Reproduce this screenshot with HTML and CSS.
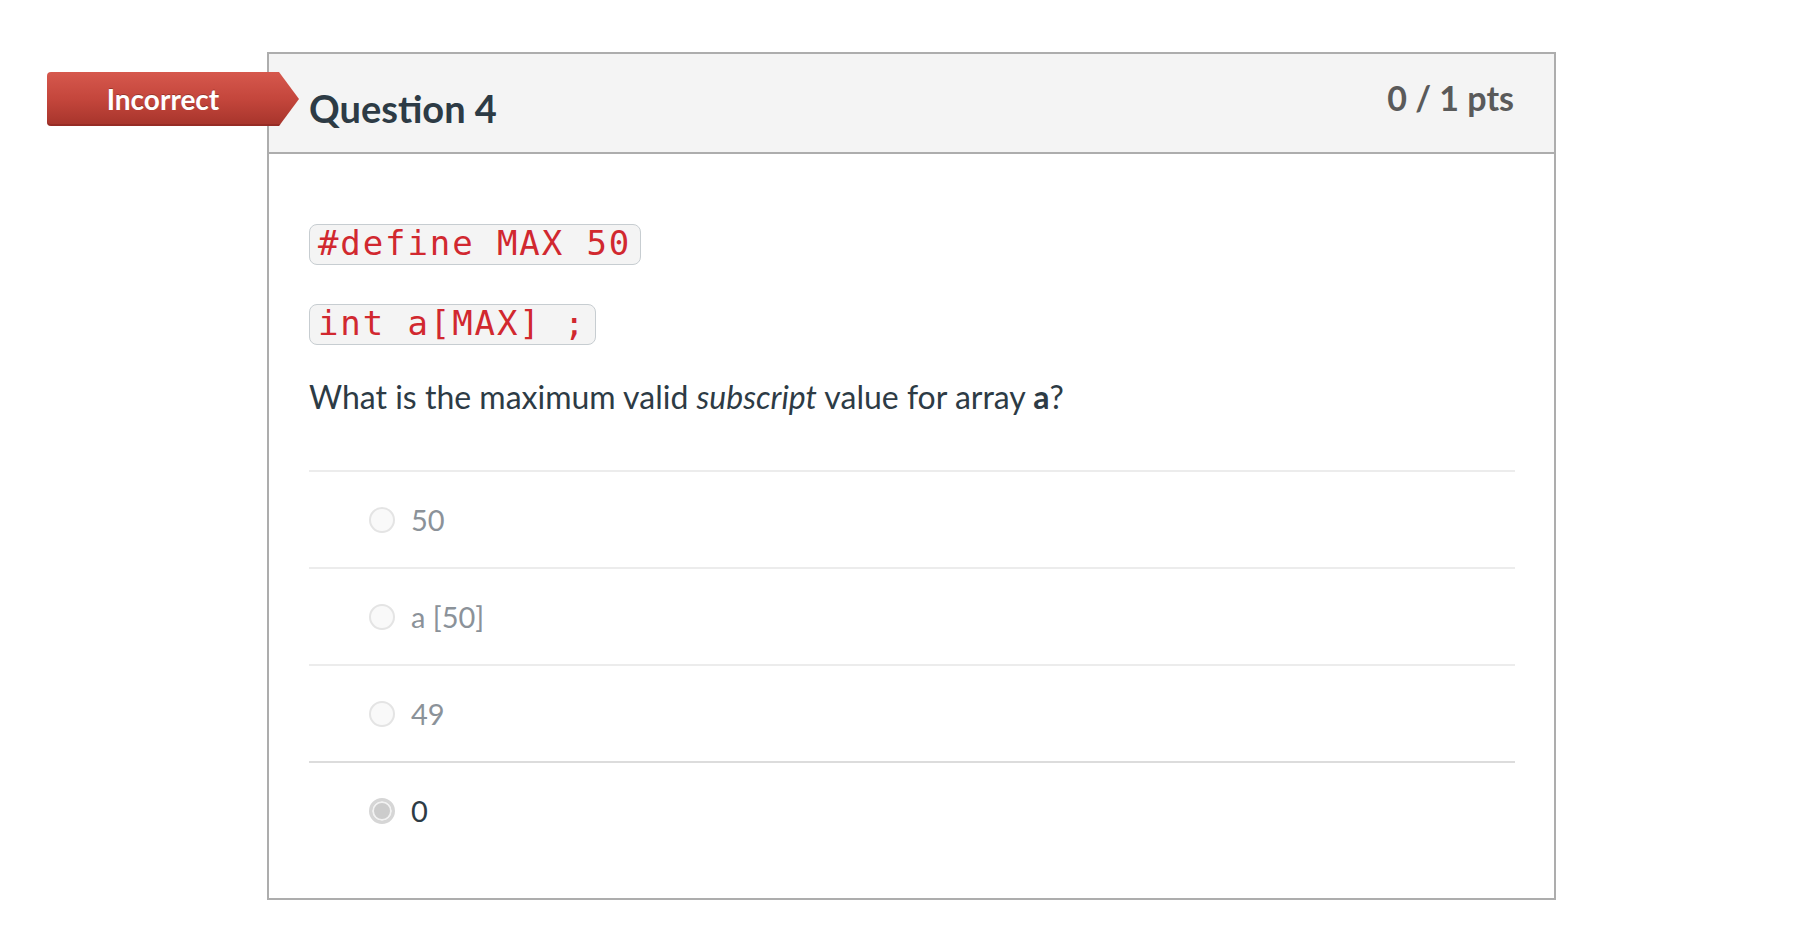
FILE: index.html
```html
<!DOCTYPE html>
<html lang="en">
<head>
<meta charset="utf-8">
<title>Question 4</title>
<link rel="stylesheet" href="styles.css">
</head>
<body>
<div class="page">
  <div class="question-card">
    <div class="answer-badge">Incorrect</div>
    <div class="q-header">
      <h2 class="q-title">Question 4</h2>
      <div class="q-points">0 / 1 pts</div>
    </div>
    <div class="q-body">
      <p class="code-p first"><code class="code">#define MAX 50</code></p>
      <p class="code-p second"><code class="code">int a[MAX] ;</code></p>
      <p class="q-text">What is the maximum valid <em>subscript</em> value for array <strong>a</strong>?</p>
      <div class="answers">
        <div class="answer"><span class="radio"></span><span class="answer-text">50</span></div>
        <div class="answer"><span class="radio"></span><span class="answer-text">a [50]</span></div>
        <div class="answer"><span class="radio"></span><span class="answer-text">49</span></div>
        <div class="answer selected"><span class="radio checked"></span><span class="answer-text">0</span></div>
      </div>
    </div>
  </div>
</div>
</body>
</html>
```

FILE: styles.css
```css
html, body {
  margin: 0;
  padding: 0;
  background: #ffffff;
}

body {
  font-family: Lato, "Noto Sans", sans-serif;
  color: #2d3b45;
}

.page {
  padding: 52px 0 0 267px;
}

.question-card {
  position: relative;
  box-sizing: border-box;
  width: 1289px;
  border: 2px solid #adadad;
  background: #fff;
}

.answer-badge {
  position: absolute;
  left: -222px;
  top: 18px;
  width: 252px;
  height: 54px;
  box-sizing: border-box;
  padding-right: 20px;
  border-radius: 4px;
  background: linear-gradient(to bottom, #d6584d 0%, #c4463c 50%, #a6342b 100%);
  clip-path: polygon(0 0, 232px 0, 100% 50%, 232px 100%, 0 100%);
  color: #fff;
  font-weight: 700;
  font-size: 28px;
  line-height: 54px;
  text-align: center;
  text-shadow: 0 -1px 0 rgba(0, 0, 0, 0.25);
  box-shadow: inset 0 -2px 0 rgba(120, 30, 25, 0.35);
  z-index: 2;
}

.q-header {
  display: flex;
  justify-content: space-between;
  align-items: flex-start;
  height: 98px;
  padding: 0 40px 0 40px;
  background: #f4f4f4;
  border-bottom: 2px solid #adadad;
}

.q-title {
  margin: 32px 0 0 0;
  font-size: 38px;
  font-weight: 700;
  line-height: 1.2;
  color: #2d3b45;
}

.q-points {
  margin-top: 24px;
  font-size: 34px;
  font-weight: 700;
  line-height: 1.2;
  color: #5a5a5a;
}

.q-body {
  padding: 70px 39px 40px 40px;
}

.code-p {
  display: flex;
  margin: 0;
}

.code-p.first {
  margin-bottom: 39px;
}

.code-p.second {
  margin-bottom: 33px;
}

.code {
  display: inline-block;
  font-family: "DejaVu Sans Mono", monospace;
  font-size: 34px;
  line-height: 37px;
  letter-spacing: 1.9px;
  padding: 0 9px 2px 8px;
  border: 1px solid #c7cdd1;
  border-radius: 8px;
  background: #f4f4f4;
  color: #d1282f;
}

.q-text {
  margin: 0 0 55px 0;
  font-size: 32px;
  line-height: 37px;
  color: #2d3b45;
}

.q-text strong {
  font-weight: 700;
}

.answers {
  display: flex;
  flex-direction: column;
}

.answer {
  display: flex;
  align-items: center;
  gap: 16px;
  height: 95px;
  padding-left: 60px;
  border-top: 2px solid #ececec;
}

.answer.selected {
  border-top-color: #dcdcdc;
}

.radio {
  box-sizing: border-box;
  width: 26px;
  height: 26px;
  border-radius: 50%;
  border: 2px solid #e4e4e4;
  background: #f9f9f9;
  flex: none;
}

.radio.checked {
  border: 3px solid #d6d6d6;
  background: #cccccc;
  box-shadow: inset 0 0 0 2px #f2f2f2;
}

.answer-text {
  font-size: 29px;
  line-height: 37px;
  color: #8b9299;
}

.answer.selected .answer-text {
  color: #2d3b45;
}
```
